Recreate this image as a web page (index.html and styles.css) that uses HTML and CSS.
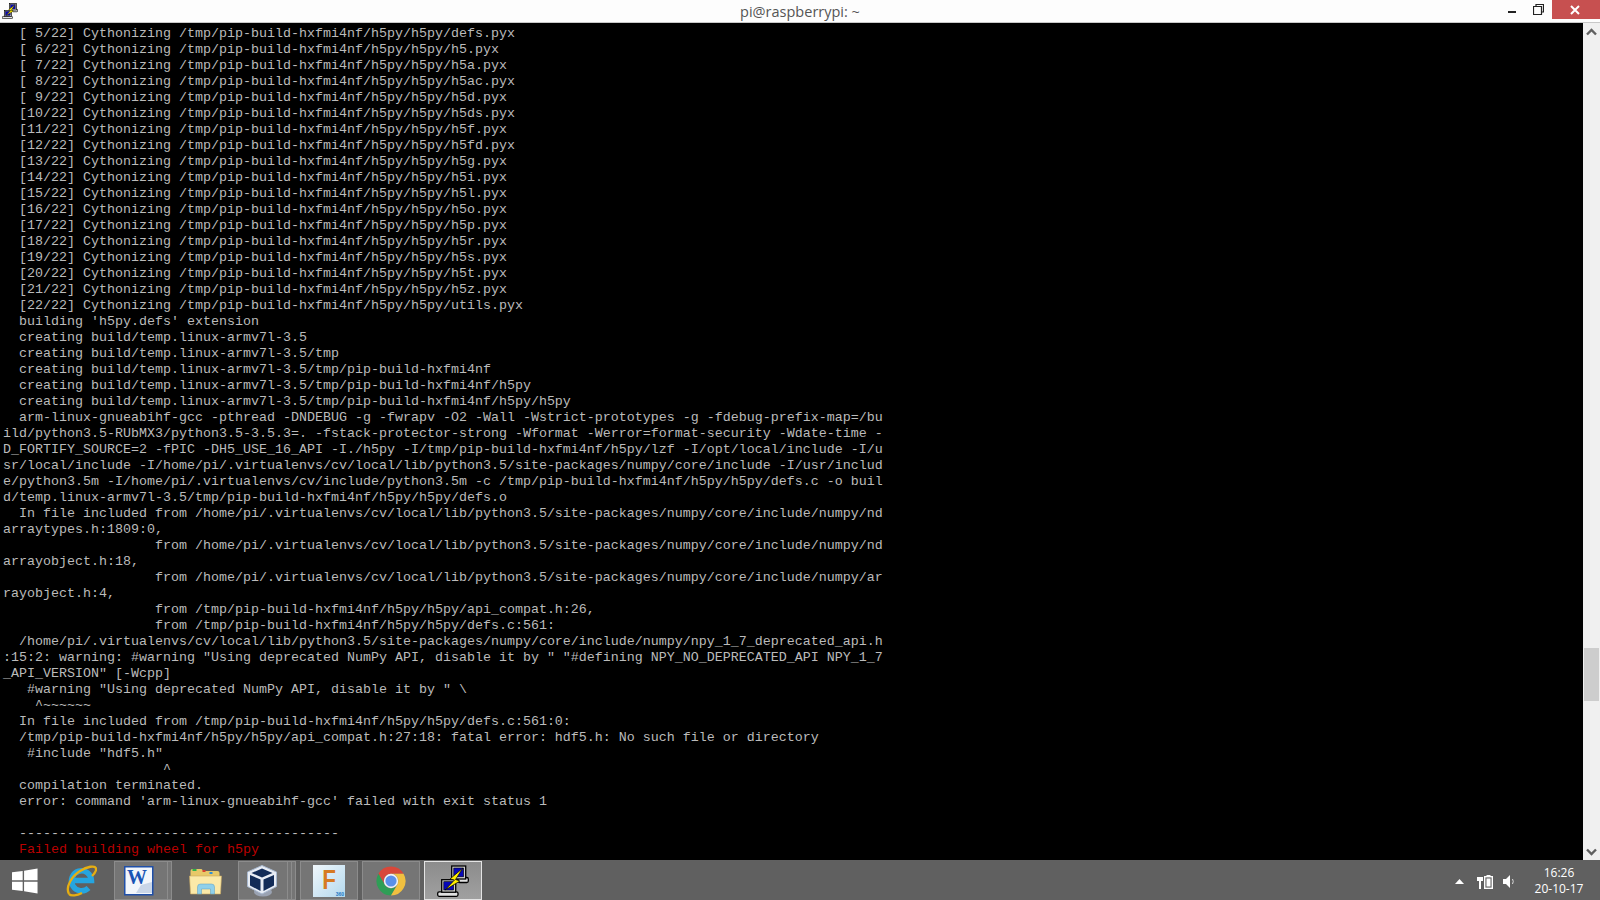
FILE: index.html
```html
<!DOCTYPE html>
<html lang="en">
<head>
<meta charset="utf-8">
<title>pi@raspberrypi: ~</title>
<link rel="stylesheet" href="styles.css">
</head>
<body>
<svg class="defs" width="0" height="0" aria-hidden="true">
  <defs>
    <symbol id="putty" viewBox="0 0 32 32">
      <g stroke="#000" stroke-width="1.3">
        <rect x="21" y="12.500" width="10.300" height="5" rx="1.500" fill="#e2e2e2"/>
        <rect x="14.700" y="1" width="14" height="13" fill="#d0d0d0"/>
        <rect x="16.800" y="3" width="9.800" height="8.800" fill="#0808b8" stroke-width=".6"/>
        <rect x=".700" y="26.800" width="20.300" height="4.500" rx="1.500" fill="#e2e2e2"/>
        <rect x="4.700" y="14.700" width="14" height="12.500" fill="#d0d0d0"/>
        <rect x="6.800" y="16.700" width="9.800" height="8.300" fill="#0808b8" stroke-width=".6"/>
      </g>
      <path d="M26 3 L13 14 L17.500 15 L8 25 L23 16 L18.500 14.500 Z" fill="#ffee00" stroke="#000" stroke-width=".7"/>
    </symbol>
  </defs>
</svg>

<header class="titlebar">
  <svg class="title-icon" viewBox="0 0 32 32"><use href="#putty"/></svg>
  <span class="title-text">pi@raspberrypi: ~</span>
  <div class="window-controls">
    <span class="ctl ctl-min"><i class="min-glyph"></i></span>
    <span class="ctl ctl-restore">
      <svg width="11" height="11" viewBox="0 0 11 11"><path d="M3 2.500V.5h7.500V8H8.500M.5 2.500h8v8h-8z" fill="none" stroke="#222" stroke-width="1.200"/></svg>
    </span>
    <span class="ctl ctl-close">
      <svg width="10" height="10" viewBox="0 0 10 10"><path d="M1 1l8 8M9 1l-8 8" stroke="#fff" stroke-width="2"/></svg>
    </span>
  </div>
</header>

<main class="window">
<div class="terminal">
<pre class="term-lines">  [ 5/22] Cythonizing /tmp/pip-build-hxfmi4nf/h5py/h5py/defs.pyx
  [ 6/22] Cythonizing /tmp/pip-build-hxfmi4nf/h5py/h5py/h5.pyx
  [ 7/22] Cythonizing /tmp/pip-build-hxfmi4nf/h5py/h5py/h5a.pyx
  [ 8/22] Cythonizing /tmp/pip-build-hxfmi4nf/h5py/h5py/h5ac.pyx
  [ 9/22] Cythonizing /tmp/pip-build-hxfmi4nf/h5py/h5py/h5d.pyx
  [10/22] Cythonizing /tmp/pip-build-hxfmi4nf/h5py/h5py/h5ds.pyx
  [11/22] Cythonizing /tmp/pip-build-hxfmi4nf/h5py/h5py/h5f.pyx
  [12/22] Cythonizing /tmp/pip-build-hxfmi4nf/h5py/h5py/h5fd.pyx
  [13/22] Cythonizing /tmp/pip-build-hxfmi4nf/h5py/h5py/h5g.pyx
  [14/22] Cythonizing /tmp/pip-build-hxfmi4nf/h5py/h5py/h5i.pyx
  [15/22] Cythonizing /tmp/pip-build-hxfmi4nf/h5py/h5py/h5l.pyx
  [16/22] Cythonizing /tmp/pip-build-hxfmi4nf/h5py/h5py/h5o.pyx
  [17/22] Cythonizing /tmp/pip-build-hxfmi4nf/h5py/h5py/h5p.pyx
  [18/22] Cythonizing /tmp/pip-build-hxfmi4nf/h5py/h5py/h5r.pyx
  [19/22] Cythonizing /tmp/pip-build-hxfmi4nf/h5py/h5py/h5s.pyx
  [20/22] Cythonizing /tmp/pip-build-hxfmi4nf/h5py/h5py/h5t.pyx
  [21/22] Cythonizing /tmp/pip-build-hxfmi4nf/h5py/h5py/h5z.pyx
  [22/22] Cythonizing /tmp/pip-build-hxfmi4nf/h5py/h5py/utils.pyx
  building 'h5py.defs' extension
  creating build/temp.linux-armv7l-3.5
  creating build/temp.linux-armv7l-3.5/tmp
  creating build/temp.linux-armv7l-3.5/tmp/pip-build-hxfmi4nf
  creating build/temp.linux-armv7l-3.5/tmp/pip-build-hxfmi4nf/h5py
  creating build/temp.linux-armv7l-3.5/tmp/pip-build-hxfmi4nf/h5py/h5py
  arm-linux-gnueabihf-gcc -pthread -DNDEBUG -g -fwrapv -O2 -Wall -Wstrict-prototypes -g -fdebug-prefix-map=/bu
ild/python3.5-RUbMX3/python3.5-3.5.3=. -fstack-protector-strong -Wformat -Werror=format-security -Wdate-time -
D_FORTIFY_SOURCE=2 -fPIC -DH5_USE_16_API -I./h5py -I/tmp/pip-build-hxfmi4nf/h5py/lzf -I/opt/local/include -I/u
sr/local/include -I/home/pi/.virtualenvs/cv/local/lib/python3.5/site-packages/numpy/core/include -I/usr/includ
e/python3.5m -I/home/pi/.virtualenvs/cv/include/python3.5m -c /tmp/pip-build-hxfmi4nf/h5py/h5py/defs.c -o buil
d/temp.linux-armv7l-3.5/tmp/pip-build-hxfmi4nf/h5py/h5py/defs.o
  In file included from /home/pi/.virtualenvs/cv/local/lib/python3.5/site-packages/numpy/core/include/numpy/nd
arraytypes.h:1809:0,
                   from /home/pi/.virtualenvs/cv/local/lib/python3.5/site-packages/numpy/core/include/numpy/nd
arrayobject.h:18,
                   from /home/pi/.virtualenvs/cv/local/lib/python3.5/site-packages/numpy/core/include/numpy/ar
rayobject.h:4,
                   from /tmp/pip-build-hxfmi4nf/h5py/h5py/api_compat.h:26,
                   from /tmp/pip-build-hxfmi4nf/h5py/h5py/defs.c:561:
  /home/pi/.virtualenvs/cv/local/lib/python3.5/site-packages/numpy/core/include/numpy/npy_1_7_deprecated_api.h
:15:2: warning: #warning "Using deprecated NumPy API, disable it by " "#defining NPY_NO_DEPRECATED_API NPY_1_7
_API_VERSION" [-Wcpp]
   #warning "Using deprecated NumPy API, disable it by " \
    ^~~~~~~
  In file included from /tmp/pip-build-hxfmi4nf/h5py/h5py/defs.c:561:0:
  /tmp/pip-build-hxfmi4nf/h5py/h5py/api_compat.h:27:18: fatal error: hdf5.h: No such file or directory
   #include "hdf5.h"
                    ^
  compilation terminated.
  error: command 'arm-linux-gnueabihf-gcc' failed with exit status 1

  ----------------------------------------</pre>
<pre class="term-lines term-red">  Failed building wheel for h5py</pre>
</div>
  <aside class="scrollbar">
    <svg class="arrow" width="11" height="8" viewBox="0 0 11 8"><path d="M1 6.500l4.500-4.500 4.500 4.500" fill="none" stroke="#606060" stroke-width="2.400"/></svg>
    <div class="track"><div class="thumb"></div></div>
    <svg class="arrow" width="11" height="8" viewBox="0 0 11 8"><path d="M1 1.500l4.500 4.500 4.500-4.500" fill="none" stroke="#606060" stroke-width="2.400"/></svg>
  </aside>
</main>

<footer class="taskbar">
  <div class="tb-start">
    <svg width="26" height="26" viewBox="0 0 28 27"><path d="M0 4.200l11.500-1.600v10.200H0zM13 2.400L27.500 0v12.800H13zM0 14.200h11.500v10.200L0 22.800zM13 14.200h14.500V27L13 24.600z" fill="#fff"/></svg>
  </div>
  <div class="tb-plain tb-ie">
    <svg width="32" height="32" viewBox="0 0 32 32">
      <path d="M8 15.500H26.500A10 10 0 1 0 23.500 23" fill="none" stroke="#25a5e0" stroke-width="5.500"/>
      <path d="M4 29C0 22 7 11 15 6 22 1.500 30 0 31 3.500 31.500 6 29 9 27 11" fill="none" stroke="#e6ae12" stroke-width="2.300"/>
      <path d="M4 29c2 2.500 8 1.500 13-1" fill="none" stroke="#e6ae12" stroke-width="2.300"/>
    </svg>
  </div>
  <div class="tb-btn tb-word">
    <svg width="30" height="30" viewBox="0 0 30 30">
      <rect x=".75" y=".75" width="28" height="28" fill="#f2f6fb" stroke="#1f4fa8" stroke-width="1.500"/>
      <path d="M17 19l11-3v11H12z" fill="#c9d6e8"/>
      <text x="13" y="18" text-anchor="middle" class="word-letter">W</text>
    </svg>
  </div>
  <div class="tb-strip"></div>
  <div class="tb-plain tb-folder">
    <svg width="33" height="28" viewBox="0 0 32 28">
      <path d="M1 4q0-2 2-2h9l2 2h14q2 0 2 2v3H1z" fill="#e8c868"/>
      <rect x="3" y="2" width="4" height="2" fill="#2fb34a"/>
      <rect x="13" y="3" width="3" height="2" fill="#d84030"/>
      <rect x="20" y="5" width="3" height="2" fill="#3090d8"/>
      <path d="M0 9h32l-1 18H1z" fill="#fbe9a8" stroke="#c9a860" stroke-width=".6"/>
      <path d="M8 27v-7q0-3 3-3h11q3 0 3 3v7h-4v-5H12v5z" fill="#8fd0ea" stroke="#5a9cc0" stroke-width=".5"/>
    </svg>
  </div>
  <div class="tb-btn tb-vbox">
    <svg width="30" height="32" viewBox="0 0 30 32">
      <ellipse cx="16" cy="27" rx="9" ry="4.500" fill="#9aa2b2"/>
      <path d="M15 .5L29.500 7v14.500L15 29 .5 21.500V7z" fill="#e8edf5" stroke="#a8b8cf"/>
      <path d="M15 3.500L25.500 8 15 12.500 4.500 8z" fill="#132c58"/>
      <path d="M3 10l10.500 4.500V26L3 20.500zM27 10l-10.500 4.500V26L27 20.500z" fill="#132c58"/>
    </svg>
  </div>
  <div class="tb-strip"></div>
  <div class="tb-strip"></div>
  <div class="tb-btn tb-fusion">
    <div class="fusion-tile"><span class="fusion-f">F</span><span class="fusion-360">360</span></div>
  </div>
  <div class="tb-btn tb-chrome">
    <svg width="30" height="30" viewBox="0 0 30 30">
      <path d="M15 .5A14.500 14.500 0 0 1 27.560 7.750H15A7.250 7.250 0 0 0 8.720 18.630L2.440 7.750A14.500 14.500 0 0 1 15 .5z" fill="#d8483a"/>
      <path d="M2.440 7.750L8.720 18.630A7.250 7.250 0 0 0 21.280 18.630L15 29.500A14.500 14.500 0 0 1 2.440 7.750z" fill="#2f9e56"/>
      <path d="M27.560 7.750H15A7.250 7.250 0 0 1 21.280 18.630L15 29.500A14.500 14.500 0 0 0 27.560 7.750z" fill="#f0c040"/>
      <circle cx="15" cy="15" r="7.200" fill="#f2f2f2"/>
      <circle cx="15" cy="15" r="5.600" fill="#5a90ea"/>
    </svg>
  </div>
  <div class="tb-btn tb-putty">
    <svg width="32" height="32" viewBox="0 0 32 32"><use href="#putty"/></svg>
  </div>

  <div class="tray">
    <svg class="tray-caret" width="9" height="5" viewBox="0 0 9 5"><path d="M0 5l4.500-5L9 5z" fill="#fff"/></svg>
    <svg class="tray-power" width="16" height="15" viewBox="0 0 16 15">
      <path d="M1.500 0v3M4.500 0v3M0 3h6v4H4v8H2V7H0z" fill="#fff"/>
      <rect x="7.700" y="2.700" width="7.600" height="11.600" fill="none" stroke="#fff" stroke-width="1.400"/>
      <rect x="9.500" y="1" width="4" height="2" fill="#fff"/>
      <rect x="9.500" y="4.500" width="4" height="8" fill="#fff"/>
    </svg>
    <svg class="tray-speaker" width="13" height="13" viewBox="0 0 13 13">
      <path d="M0 4h3l4-4v13L3 9H0z" fill="#fff"/>
      <path d="M9.500 4q1.500 2.500 0 5" fill="none" stroke="#ddd"/>
    </svg>
    <div class="clock"><span>16:26</span><span>20-10-17</span></div>
  </div>
</footer>
</body>
</html>
```
FILE: styles.css
```css
* { box-sizing: border-box; }
html, body { margin: 0; padding: 0; }
body {
  width: 1600px;
  height: 900px;
  overflow: hidden;
  display: flex;
  flex-direction: column;
  background: #000;
}
.defs { position: absolute; }

/* Title bar */
.titlebar {
  flex: 0 0 23px;
  display: flex;
  align-items: flex-start;
  justify-content: space-between;
  background: #fdfdfd;
  border-bottom: 1px solid #c8c8c8;
  position: relative;
}
.title-icon { width: 16px; height: 16px; margin: 3px 0 0 2px; }
.title-text {
  position: absolute;
  left: 0;
  right: 0;
  top: 3px;
  text-align: center;
  font: 14.5px/18px "Open Sans", "Noto Sans", sans-serif;
  color: #555;
}
.window-controls { display: flex; align-items: flex-start; position: relative; }
.ctl { display: flex; align-items: center; justify-content: center; height: 19px; }
.ctl-min { width: 25px; padding-right: 1px; }
.ctl-restore { width: 27px; padding-right: 1px; }
.ctl-close { width: 48px; background: #c75050; padding-right: 2px; }
.min-glyph { display: block; width: 8px; height: 2px; margin-top: 5px; background: #222; }

/* Terminal */
.window { flex: 1; display: flex; min-height: 0; }
.terminal {
  flex: 1;
  padding: 3px 0 0 3px;
  overflow: hidden;
  background: #000;
}
.term-lines {
  margin: 0;
  color: #bbbbbb;
  font: 13.333px/16px "Liberation Mono", "Courier New", monospace;
}
.term-red { color: #bb0000; }
.scrollbar {
  flex: 0 0 17px;
  display: flex;
  flex-direction: column;
  align-items: center;
  background: #f0f0f0;
  padding: 5px 0 4px;
  gap: 6px;
}
.track { flex: 1; width: 100%; display: flex; flex-direction: column; justify-content: flex-end; padding: 0 1px 141px; }
.thumb { height: 53px; background: #cdcdcd; }
.arrow { display: block; flex: none; }

/* Taskbar */
.taskbar {
  flex: 0 0 40px;
  display: flex;
  align-items: stretch;
  background: #606060;
  padding-top: 1px;
}
.tb-btn, .tb-plain {
  display: flex;
  align-items: center;
  justify-content: center;
}
.tb-btn {
  background: #757575;
  border: 1px solid #8c8c8c;
}
.tb-start { width: 50px; display: flex; align-items: center; justify-content: center; }
.tb-ie { width: 63px; padding-right: 2px; }
.tb-word { width: 54px; margin-left: 1px; padding-right: 4px; }
.tb-strip { width: 4px; background: #757575; border: 1px solid #8c8c8c; border-left: 0; }
.tb-folder { width: 66px; }
.tb-vbox { width: 50px; padding-right: 2px; }
.tb-fusion { width: 58px; margin-left: 4px; }
.tb-chrome { width: 58px; margin-left: 4px; }
.tb-putty {
  width: 58px;
  margin-left: 4px;
  background: linear-gradient(#8c8c8c, #a0a0a0);
  border-color: #e4e4e4;
}
.fusion-tile {
  position: relative;
  width: 32px;
  height: 32px;
  background: linear-gradient(135deg, #f0f7fb, #b4d9ee);
}
.fusion-f {
  display: block;
  height: 27px;
  font: 700 28px/30px "Liberation Sans", sans-serif;
  color: #d67a22;
  transform: scaleX(.8);
  text-align: center;
}
.fusion-360 {
  position: absolute;
  right: 1px;
  bottom: 0;
  font: 700 5px/5px "Liberation Sans", sans-serif;
  color: #1d77c4;
}
.word-letter { font: 700 20px "Liberation Serif", serif; fill: #1a55b5; }

/* Tray */
.tray { margin-left: auto; display: flex; align-items: center; }
.tray-caret { margin-right: 13px; margin-top: 2px; }
.tray-power { margin-right: 10px; margin-top: 2px; }
.tray-speaker { margin-right: 10px; margin-top: 2px; }
.clock {
  width: 66px;
  margin-right: 8px;
  display: flex;
  flex-direction: column;
  align-items: center;
  font: 12px/16px "Open Sans", "Noto Sans", sans-serif;
  color: #fff;
}
```
